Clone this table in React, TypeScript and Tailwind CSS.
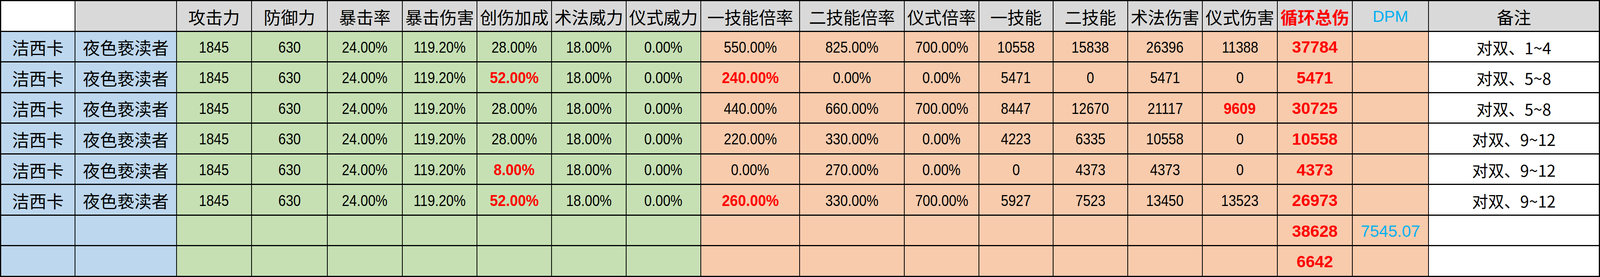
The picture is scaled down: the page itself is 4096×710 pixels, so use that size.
import React from "react";

type Kind = "cjk" | "num" | "redPct" | "redNum" | "blue" | "redHead" | "blueHead" | "note";

const BG = {
  head: "bg-[#d9d9d9]",
  white: "bg-white",
  blue: "bg-[#bdd7ee]",
  green: "bg-[#c6e0b4]",
  orange: "bg-[#f8cbad]",
};

const CJK = '"Noto Sans CJK SC", sans-serif';
const SANS = '"Liberation Sans", "Noto Sans CJK SC", sans-serif';

function Cell({ text, bg, kind }: { text?: string; bg: string; kind?: Kind }) {
  let cls = "text-black text-[44px]";
  let font = CJK;
  let inner = "";
  switch (kind) {
    case "num":
      cls = "text-black text-[41px]";
      font = SANS;
      inner = "inline-block scale-x-[0.84]";
      break;
    case "redPct":
      cls = "text-[#ff0000] font-bold text-[41px]";
      font = SANS;
      inner = "inline-block scale-x-[0.9]";
      break;
    case "redNum":
      cls = "text-[#ff0000] font-bold text-[42px]";
      font = SANS;
      break;
    case "blue":
      cls = "text-[#00b0f0] text-[42px]";
      font = SANS;
      break;
    case "redHead":
      cls = "text-[#ff0000] font-bold text-[44px]";
      font = CJK;
      break;
    case "blueHead":
      cls = "text-[#00b0f0] text-[41px]";
      font = SANS;
      break;
    case "note":
      cls = "text-black text-[41px]";
      font = CJK;
      break;
    default:
      break;
  }
  return (
    <div className={`${bg} flex items-center justify-center overflow-hidden whitespace-nowrap pt-[4px] leading-none ${cls}`} style={{ fontFamily: font }}>
      {inner ? <span className={inner}>{text}</span> : text}
    </div>
  );
}

const headers = [
  "",
  "",
  "攻击力",
  "防御力",
  "暴击率",
  "暴击伤害",
  "创伤加成",
  "术法威力",
  "仪式威力",
  "一技能倍率",
  "二技能倍率",
  "仪式倍率",
  "一技能",
  "二技能",
  "术法伤害",
  "仪式伤害",
  "循环总伤",
  "DPM",
  "备注",
];

type V = string | { t: string; red: true };
const r = (t: string): V => ({ t, red: true });

const rows: { vals: V[]; note: string }[] = [
  { vals: ["1845", "630", "24.00%", "119.20%", "28.00%", "18.00%", "0.00%", "550.00%", "825.00%", "700.00%", "10558", "15838", "26396", "11388"], note: "对双、1~4" },
  { vals: ["1845", "630", "24.00%", "119.20%", r("52.00%"), "18.00%", "0.00%", r("240.00%"), "0.00%", "0.00%", "5471", "0", "5471", "0"], note: "对双、5~8" },
  { vals: ["1845", "630", "24.00%", "119.20%", "28.00%", "18.00%", "0.00%", "440.00%", "660.00%", "700.00%", "8447", "12670", "21117", r("9609")], note: "对双、5~8" },
  { vals: ["1845", "630", "24.00%", "119.20%", "28.00%", "18.00%", "0.00%", "220.00%", "330.00%", "0.00%", "4223", "6335", "10558", "0"], note: "对双、9~12" },
  { vals: ["1845", "630", "24.00%", "119.20%", r("8.00%"), "18.00%", "0.00%", "0.00%", "270.00%", "0.00%", "0", "4373", "4373", "0"], note: "对双、9~12" },
  { vals: ["1845", "630", "24.00%", "119.20%", r("52.00%"), "18.00%", "0.00%", r("260.00%"), "330.00%", "700.00%", "5927", "7523", "13450", "13523"], note: "对双、9~12" },
];
const totals = ["37784", "5471", "30725", "10558", "4373", "26973"];

export default function App() {
  const cells: React.ReactNode[] = [];
  headers.forEach((h, i) => {
    const bg = i === 0 ? BG.white : BG.head;
    const kind: Kind | undefined = i === 16 ? "redHead" : i === 17 ? "blueHead" : undefined;
    cells.push(<Cell key={`h${i}`} text={h} bg={bg} kind={kind} />);
  });
  rows.forEach((row, ri) => {
    cells.push(<Cell key={`r${ri}a`} text="洁西卡" bg={BG.blue} />);
    cells.push(<Cell key={`r${ri}b`} text="夜色亵渎者" bg={BG.blue} />);
    row.vals.forEach((v, ci) => {
      const bg = ci < 7 ? BG.green : BG.orange;
      if (typeof v === "string") {
        cells.push(<Cell key={`r${ri}c${ci}`} text={v} bg={bg} kind="num" />);
      } else {
        cells.push(<Cell key={`r${ri}c${ci}`} text={v.t} bg={bg} kind="redPct" />);
      }
    });
    cells.push(<Cell key={`r${ri}t`} text={totals[ri]} bg={BG.orange} kind="redNum" />);
    cells.push(<Cell key={`r${ri}d`} text="" bg={BG.orange} />);
    cells.push(<Cell key={`r${ri}n`} text={row.note} bg={BG.white} kind="note" />);
  });
  const extra = [
    { total: "38628", dpm: "7545.07" },
    { total: "6642", dpm: "" },
  ];
  extra.forEach((e, ri) => {
    cells.push(<Cell key={`e${ri}a`} bg={BG.blue} />);
    cells.push(<Cell key={`e${ri}b`} bg={BG.blue} />);
    for (let ci = 0; ci < 14; ci++) {
      cells.push(<Cell key={`e${ri}c${ci}`} bg={ci < 7 ? BG.green : BG.orange} />);
    }
    cells.push(<Cell key={`e${ri}t`} text={e.total} bg={BG.orange} kind="redNum" />);
    cells.push(<Cell key={`e${ri}d`} text={e.dpm} bg={BG.orange} kind="blue" />);
    cells.push(<Cell key={`e${ri}n`} bg={BG.white} />);
  });

  return (
    <div className="w-[4096px] h-[710px] bg-white">
      <div className="grid h-[710px] w-[4096px] bg-black p-[3px] gap-x-[2px] gap-y-[3px] grid-cols-[188px_258px_190px_192px_190px_189px_189px_189px_189px_251px_266px_189px_188px_189px_189px_190px_190px_193px_1fr] grid-rows-[repeat(9,minmax(0,1fr))]">
        {cells}
      </div>
    </div>
  );
}
